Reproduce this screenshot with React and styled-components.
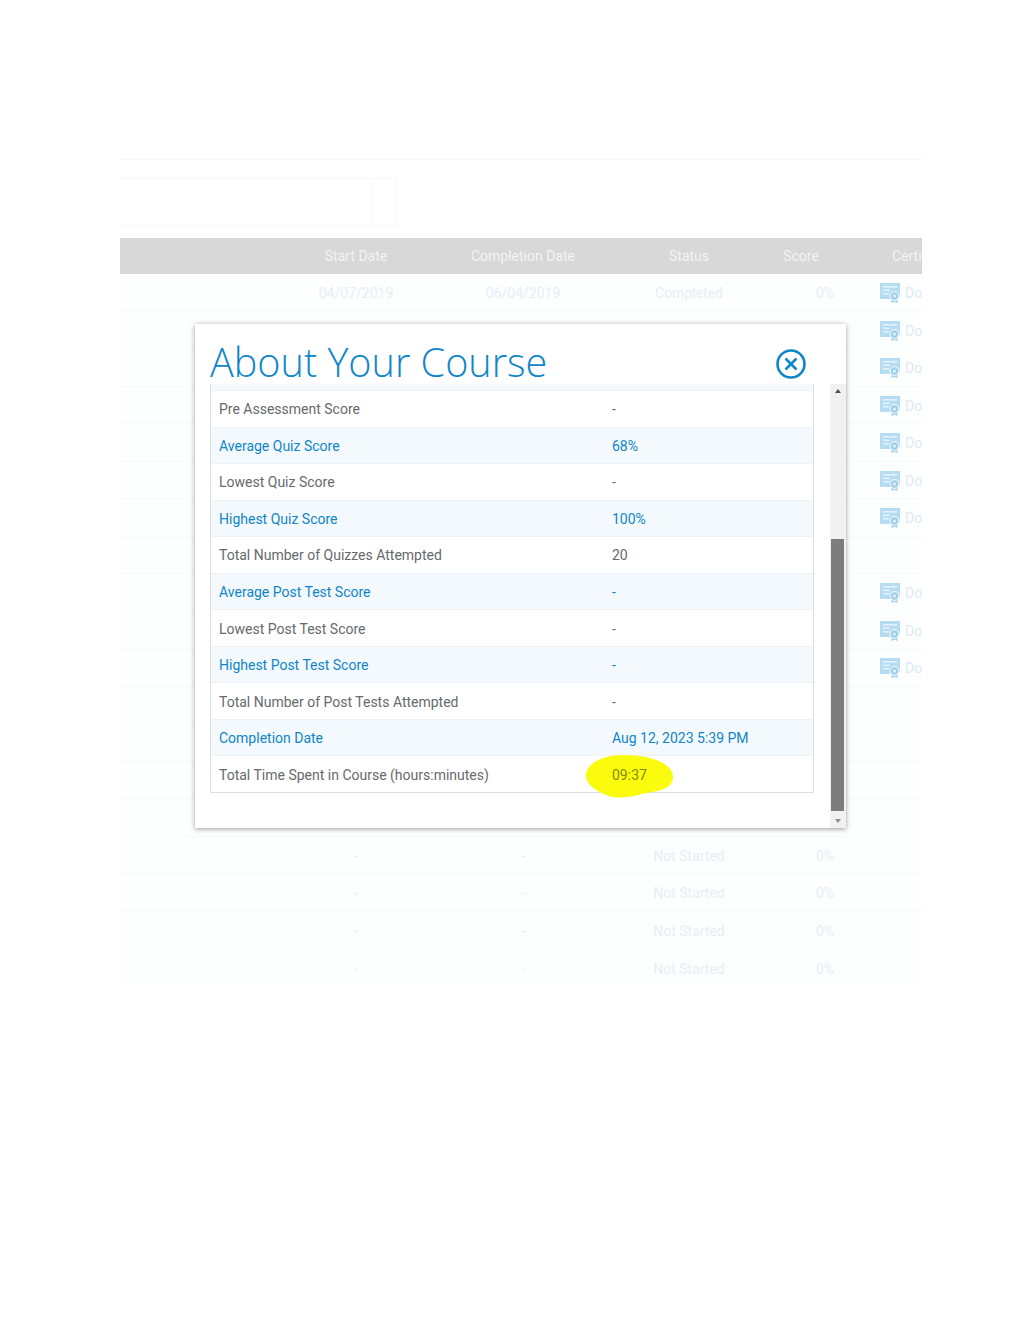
import styled, { createGlobalStyle } from "styled-components";

const GlobalStyle = createGlobalStyle`
html, body {
  margin: 0;
  padding: 0;
  background: #fff;
  font-family: "Roboto", "Liberation Sans", sans-serif;
}
`;

const Page = styled.div`
position: relative;
width: 1020px;
height: 1320px;
padding: 159px 98px 0 120px;
box-sizing: border-box;
overflow: hidden;
`;

const Backdrop = styled.div`
border-top: 1px solid #f6f6f6;
overflow: hidden;
`;

const FilterBox = styled.div`
width: 276px;
height: 48px;
margin: 18px 0 12px;
box-sizing: border-box;
border: 1px solid #f8f8f8;
border-left: none;
display: flex;
justify-content: flex-end;
`;

const FilterEnd = styled.div`
width: 22px;
border-left: 1px solid #fafafa;
`;

const HeaderRow = styled.div`
height: 36px;
background: #d8d8d8;
display: grid;
grid-template-columns: 152px 168px 166px 166px 58px 1fr;
align-items: center;
font-size: 14px;
color: #f3f3f3;
`;

const HeadCell = styled.div`
text-align: center;
white-space: nowrap;
`;

const CertHead = styled.div`
padding-left: 62px;
white-space: nowrap;
overflow: hidden;
`;

const Row = styled.div`
height: 37.5px;
box-sizing: border-box;
padding-top: 2px;
border-bottom: 1px solid #f8f9fa;
background: #fdfefe;
display: grid;
grid-template-columns: 152px 168px 166px 166px 106px 1fr;
align-items: center;
font-size: 14px;
color: #e6eef6;

&:last-child {
  border-bottom: none;
}
`;

const Cell = styled.div`
text-align: center;
white-space: nowrap;
`;

const CertCell = styled.div`
display: flex;
align-items: center;
gap: 4px;
padding-left: 2px;
color: #dfeaf4;
overflow: hidden;
white-space: nowrap;
`;

const Modal = styled.div`
position: absolute;
left: 195px;
top: 324px;
width: 651px;
height: 504px;
background: #fff;
box-shadow: 0 1px 5px rgba(0, 0, 0, 0.4);
display: flex;
flex-direction: column;
`;

const ModalHead = styled.div`
height: 60px;
flex-shrink: 0;
padding: 0 39px 0 15px;
display: flex;
justify-content: space-between;
align-items: flex-end;
`;

const Title = styled.h1`
margin: 0 0 -4px;
font-family: "Open Sans", "Liberation Sans", sans-serif;
font-weight: 300;
font-size: 39.6px;
line-height: 52px;
color: #0f86c9;
`;

const CloseIcon = styled.svg`
width: 32px;
height: 32px;
margin-bottom: 4px;
`;

const ModalBody = styled.div`
flex: 1;
min-height: 0;
display: flex;
padding: 0 0 0 15px;
`;

const TableWrap = styled.div`
width: 604px;
height: 409px;
box-sizing: border-box;
border: 1px solid #dcdfe2;
border-top: none;
`;

const Sliver = styled.div`
height: 6px;
background: #f3f8fc;
`;

const InfoRow = styled.div`
height: 36.55px;
box-sizing: border-box;
border-top: 1px solid #eef2f5;
padding-top: 1px;
display: grid;
grid-template-columns: 393px 1fr;
align-items: center;
padding-left: 8px;
font-size: 14px;
background: ${(p) => (p.$alt ? "#f4f9fd" : "#fff")};
color: ${(p) => (p.$alt ? "#0f86c9" : "#666a6d")};
`;

const ValueCell = styled.div`
position: relative;
`;

const Highlight = styled.svg`
position: absolute;
left: -28px;
top: -12.5px;
width: 92px;
height: 46px;
`;

const ValueText = styled.span`
position: relative;
color: ${(p) => (p.$marked ? "#87880a" : "inherit")};
`;

const Scrollbar = styled.div`
width: 16px;
height: 444px;
margin-left: 16px;
background: #f1f1f1;
display: flex;
flex-direction: column;
align-items: center;
justify-content: space-between;
padding: 5px 0;
box-sizing: border-box;
`;

const Thumb = styled.div`
width: 13px;
height: 272px;
margin: auto 1px 8px 0;
background: #7d7d7d;
`;

const Arrow = styled.div`
width: 0;
height: 0;
border-left: 3.5px solid transparent;
border-right: 3.5px solid transparent;
${(p) => (p.$down ? "border-top: 4px solid #8c8c8c;" : "border-bottom: 4px solid #505050;")}
`;

const CertIcon = () => (
  <svg width="21" height="22" viewBox="0 0 21 22" style={{ flexShrink: 0 }}>
    <path d="M0 1h20v14h-7v2H0z" fill="#b6dcf2" />
    <rect x="3" y="4" width="14" height="1.6" fill="#e2f1fa" />
    <rect x="3" y="7.5" width="7" height="1.6" fill="#e2f1fa" />
    <rect x="3" y="11" width="6" height="1.6" fill="#e2f1fa" />
    <path d="M11.5 16h6v5l-3-1.2-3 1.2z" fill="#9fd0ec" />
    <circle cx="14.5" cy="14" r="4.4" fill="#9fd0ec" stroke="#fff" strokeWidth="1" />
    <circle cx="14.5" cy="14" r="1.5" fill="#e2f1fa" />
  </svg>
);

const done = { start: "04/07/2019", end: "06/04/2019", status: "Completed", score: "0%", cert: true };
const hiddenCert = { cert: true };
const hidden = {};
const notStarted = { start: "-", end: "-", status: "Not Started", score: "0%" };

const tableRows = [
  done,
  hiddenCert,
  hiddenCert,
  hiddenCert,
  hiddenCert,
  hiddenCert,
  hiddenCert,
  hidden,
  hiddenCert,
  hiddenCert,
  hiddenCert,
  hidden,
  hidden,
  hidden,
  hidden,
  notStarted,
  notStarted,
  notStarted,
  notStarted,
];

const courseInfo = [
  ["Pre Assessment Score", "-"],
  ["Average Quiz Score", "68%"],
  ["Lowest Quiz Score", "-"],
  ["Highest Quiz Score", "100%"],
  ["Total Number of Quizzes Attempted", "20"],
  ["Average Post Test Score", "-"],
  ["Lowest Post Test Score", "-"],
  ["Highest Post Test Score", "-"],
  ["Total Number of Post Tests Attempted", "-"],
  ["Completion Date", "Aug 12, 2023 5:39 PM"],
  ["Total Time Spent in Course (hours:minutes)", "09:37"],
];

const App = () => {
  return (
    <Page>
      <GlobalStyle />
      <Backdrop>
        <FilterBox>
          <FilterEnd />
        </FilterBox>
        <HeaderRow>
          <span />
          <HeadCell>Start Date</HeadCell>
          <HeadCell>Completion Date</HeadCell>
          <HeadCell>Status</HeadCell>
          <HeadCell>Score</HeadCell>
          <CertHead>Certi</CertHead>
        </HeaderRow>
        {tableRows.map((row, i) => (
          <Row key={i}>
            <span />
            <Cell>{row.start}</Cell>
            <Cell>{row.end}</Cell>
            <Cell>{row.status}</Cell>
            <Cell>{row.score}</Cell>
            {row.cert ? (
              <CertCell>
                <CertIcon />
                Do
              </CertCell>
            ) : (
              <span />
            )}
          </Row>
        ))}
      </Backdrop>

      <Modal>
        <ModalHead>
          <Title>About Your Course</Title>
          <CloseIcon viewBox="0 0 32 32">
            <circle cx="16" cy="16" r="13.5" fill="none" stroke="#0f86c9" strokeWidth="2.6" />
            <path d="M10.5 10.5l11 11M21.5 10.5l-11 11" stroke="#0f86c9" strokeWidth="2.6" fill="none" />
          </CloseIcon>
        </ModalHead>
        <ModalBody>
          <TableWrap>
            <Sliver />
            {courseInfo.map(([label, value], i) => {
              const marked = value === "09:37";
              return (
                <InfoRow key={label} $alt={i % 2 === 1}>
                  <div>{label}</div>
                  <ValueCell>
                    {marked && (
                      <Highlight viewBox="0 0 92 46">
                        <path
                          d="M2 20C4 8 20 1 40 1c18 0 32 3 42 10 8 6 9 14 4 20-6 6-18 7-28 9-12 4-28 5-36 1C12 37 1 30 2 20z"
                          fill="#fbfb0d"
                        />
                      </Highlight>
                    )}
                    <ValueText $marked={marked}>{value}</ValueText>
                  </ValueCell>
                </InfoRow>
              );
            })}
          </TableWrap>
          <Scrollbar>
            <Arrow />
            <Thumb />
            <Arrow $down />
          </Scrollbar>
        </ModalBody>
      </Modal>
    </Page>
  );
};

export default App;
